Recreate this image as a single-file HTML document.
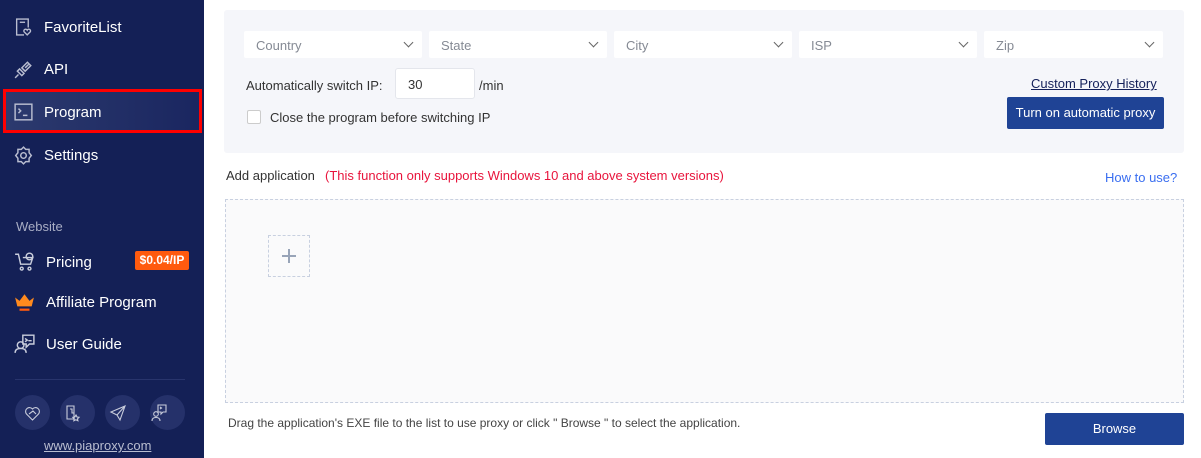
<!DOCTYPE html>
<html><head><meta charset="utf-8"><style>
*{box-sizing:border-box;margin:0;padding:0}
body{width:1201px;height:458px;overflow:hidden;background:#fff;font-family:"Liberation Sans",sans-serif;position:relative}
.side{position:absolute;left:0;top:0;width:204px;height:458px;background:#142056;color:#fff}
.it{position:absolute;left:14px;font-size:15px;display:flex;align-items:center}
.it svg{margin-right:11px}
.ab{position:absolute}
.panel{position:absolute;left:224px;top:10px;width:960px;height:143px;background:#f5f6fa;border-radius:3px}
.dd{position:absolute;top:31px;height:27px;background:#fff;font-size:13px;color:#858a94;padding:7px 0 0 12px;border-radius:2px}
.dd:after{content:"";position:absolute;right:10px;top:8px;width:6px;height:6px;border-right:1.3px solid #666;border-bottom:1.3px solid #666;transform:rotate(45deg)}
.t{position:absolute;font-size:13px;color:#333;white-space:nowrap}
.ic{position:absolute;top:395px;width:35px;height:35px;border-radius:50%;background:#25316a}
</style></head><body>
<div class="side">
 <div class="it" style="top:17px"><svg width="19" height="20" viewBox="0 0 17 19" fill="none" stroke="#b9bdd0" stroke-width="1.3"><path d="M9 17H2V2h11v8"/><path d="M5 5h5"/><path d="M12 17l-3-3a1.5 1.5 0 0 1 3-1.5a1.5 1.5 0 0 1 3 1.5z"/></svg>FavoriteList</div>
 <div class="it" style="top:60px"><svg width="19" height="19" viewBox="0 0 17 17" fill="none" stroke="#b9bdd0" stroke-width="1.3"><path d="M1 16l3-3M5 8l4 4-2 2-4-4zM10 7l3-3M12 2l3 3-5 5-3-3z"/></svg>API</div>
 <div class="ab" style="left:3px;top:89px;width:199px;height:44px;border:3px solid #f00;background:linear-gradient(90deg,#2c3a6e,#1a2660)"></div>
 <div class="it" style="top:103px"><svg width="19" height="18" viewBox="0 0 17 16" fill="none" stroke="#b9bdd0" stroke-width="1.3"><rect x="1" y="1" width="15" height="14"/><path d="M4 5l2 2-2 2M8 11h4"/></svg>Program</div>
 <div class="it" style="top:146px"><svg width="19" height="19" viewBox="0 0 17 17" fill="none" stroke="#b9bdd0" stroke-width="1.3"><path d="M8.5 1l2 2h3v3l2 2.5-2 2.5v3h-3l-2 2-2-2h-3v-3l-2-2.5 2-2.5v-3h3z"/><circle cx="8.5" cy="8.5" r="2.5"/></svg>Settings</div>
 <div class="ab" style="left:16px;top:219px;font-size:13px;color:#a8adc4">Website</div>
 <div class="it" style="top:252px"><svg width="21" height="20" viewBox="0 0 19 18" fill="none" stroke="#c9cddc" stroke-width="1.3"><path d="M1 2h3l2 9h9l2-6H8"/><circle cx="7" cy="15" r="1.3"/><circle cx="14" cy="15" r="1.3"/><circle cx="14" cy="4" r="3"/></svg>Pricing</div>
 <div class="ab" style="left:135px;top:251px;width:54px;height:19px;background:#ff5a0e;border-radius:2px;font-size:12px;font-weight:bold;color:#fff;text-align:center;line-height:19px">$0.04/IP</div>
 <div class="it" style="top:293px"><svg width="21" height="19" viewBox="0 0 19 17"><path d="M1 4l4 3 4.5-6 4.5 6 4-3-2 8H3z" fill="#ff8a1e"/><rect x="5" y="14" width="9" height="2" fill="#ff5a0e"/></svg>Affiliate Program</div>
 <div class="it" style="top:334px"><svg width="21" height="20" viewBox="0 0 19 18" fill="none" stroke="#c9cddc" stroke-width="1.3"><path d="M8 1h10v8h-4l-3 3V9H8zM10 4l2 1.5-2 1.5M13 6h3"/><circle cx="6" cy="10" r="3"/><path d="M1 17c0-3 2-4 5-4s5 1 5 4"/></svg>User Guide</div>
 <div class="ab" style="left:15px;top:379px;width:170px;height:1px;background:#28346c"></div>
 <div class="ic" style="left:15px"></div><div class="ic" style="left:60px"></div><div class="ic" style="left:105px"></div><div class="ic" style="left:150px"></div>
 <svg class="ab" style="left:15px;top:395px" width="170" height="35" fill="none" stroke="#c9cddc" stroke-width="1.1"><path d="M17.5 25l-6-6a3.5 3.5 0 0 1 6-5a3.5 3.5 0 0 1 6 5z M14 19l4-3 3 3"/><path d="M52 11h7v13h-7zM55 14h2v4h2M61 20l1 2 2 .3-1.5 1.5.4 2-2-1-2 1 .4-2-1.5-1.5 2-.3z"/><path d="M96 17l14-6-5 14-3-5zM102 20l8-9"/><path d="M143 10h8v7h-3l-2 2v-2h-3zM145 12l1.5 1-1.5 1"/><circle cx="141" cy="19" r="2.3"/><path d="M137 26c0-2.5 1.5-3.5 4-3.5s4 1 4 3.5"/></svg>
 <div class="ab" style="left:44px;top:438px;font-size:13px;color:#b9bdd0;text-decoration:underline">www.piaproxy.com</div>
</div>
<div class="panel"></div>
<div class="dd" style="left:244px;width:178px">Country</div>
<div class="dd" style="left:429px;width:178px">State</div>
<div class="dd" style="left:614px;width:178px">City</div>
<div class="dd" style="left:799px;width:178px">ISP</div>
<div class="dd" style="left:984px;width:179px">Zip</div>
<div class="t" style="left:246px;top:78px">Automatically switch IP:</div>
<div class="ab" style="left:395px;top:68px;width:80px;height:31px;background:#fff;border:1px solid #e4e6ec;border-radius:3px;font-size:13px;color:#333;padding:8px 0 0 12px">30</div>
<div class="t" style="left:479px;top:78px">/min</div>
<div class="ab" style="left:247px;top:110px;width:14px;height:14px;border:1px solid #ccc;background:#fff;border-radius:2px"></div>
<div class="t" style="left:270px;top:110px">Close the program before switching IP</div>
<div class="t" style="left:1031px;top:76px;text-decoration:underline;color:#14205a">Custom Proxy History</div>
<div class="ab" style="left:1007px;top:97px;width:157px;height:32px;background:#1f4395;color:#fff;font-size:13px;text-align:center;line-height:32px;border-radius:2px">Turn on automatic proxy</div>
<div class="t" style="left:226px;top:168px">Add application</div>
<div class="t" style="left:325px;top:168px;color:#e8143c">(This function only supports Windows 10 and above system versions)</div>
<div class="t" style="left:1105px;top:170px;color:#3a6ef0">How to use?</div>
<div class="ab" style="left:225px;top:199px;width:959px;height:204px;border:1.5px dashed #c8d0e0;background:#fafafb"></div>
<div class="ab" style="left:268px;top:235px;width:42px;height:42px;border:1px dashed #c8d0e0"></div>
<div class="ab" style="left:282px;top:255px;width:14px;height:2px;background:#98a4b8"></div>
<div class="ab" style="left:288px;top:249px;width:2px;height:14px;background:#98a4b8"></div>
<div class="t" style="left:228px;top:416px;font-size:12px;color:#444">Drag the application's EXE file to the list to use proxy or click " Browse " to select the application.</div>
<div class="ab" style="left:1045px;top:413px;width:139px;height:32px;background:#1f4395;color:#fff;font-size:13px;text-align:center;line-height:32px;border-radius:2px">Browse</div>
</body></html>
